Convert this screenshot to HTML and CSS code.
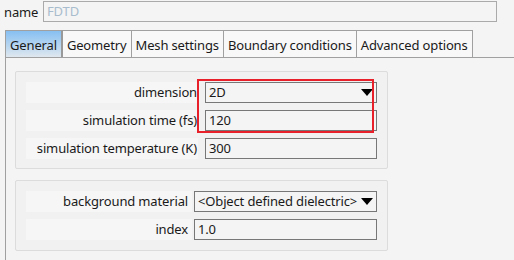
FILE: index.html
```html
<!DOCTYPE html>
<html lang="en">

<head>
    <meta charset="UTF-8" />
    <title>FDTD</title>
    <link rel="stylesheet" href="styles.css">
</head>

<body>
    <div class="name-row">
        <span class="name-label">name</span>
        <div class="name-input">FDTD</div>
    </div>

    <div class="tabs">
        <div class="tab active">General</div>
        <div class="tab">Geometry</div>
        <div class="tab">Mesh settings</div>
        <div class="tab">Boundary conditions</div>
        <div class="tab">Advanced options</div>
    </div>

    <div class="panel">
        <div class="group group-sim">
            <div class="row">
                <div class="label">dimension</div>
                <div class="field combo">2D<span class="arrow"></span></div>
            </div>
            <div class="row">
                <div class="label">simulation time (fs)</div>
                <div class="field">120</div>
            </div>
            <div class="row">
                <div class="label">simulation temperature (K)</div>
                <div class="field">300</div>
            </div>
            <!-- highlight annotation -->
            <div class="highlight"></div>
        </div>

        <div class="group group-bg">
            <div class="row">
                <div class="label">background material</div>
                <div class="field combo">&lt;Object defined dielectric&gt;<span class="arrow"></span></div>
            </div>
            <div class="row">
                <div class="label">index</div>
                <div class="field">1.0</div>
            </div>
        </div>
    </div>
</body>

</html>
```

FILE: styles.css
```css
* {
    box-sizing: border-box;
}

body {
    margin: 0;
    background: #f4f4f4;
    font-family: 'Noto Sans', sans-serif;
    font-size: 13px;
    letter-spacing: -0.15px;
    color: #1a1a1a;
}

.name-row {
    display: flex;
    align-items: center;
    padding: 1px 0 0 4px;
    gap: 7px;
}

.name-label {
    width: 32px;
}

.name-input {
    width: 454px;
    height: 21px;
    border: 1px solid #aaa;
    padding-left: 3px;
    line-height: 19px;
    color: #a8bccd;
    background: #f4f4f4;
}

.tabs {
    display: flex;
    margin: 8px 0 0 5px;
}

.tab {
    height: 27px;
    line-height: 25px;
    padding: 2px 4px 0 4px;
    border: 1px solid #a0a0a0;
    border-left-width: 0;
    border-bottom: none;
    background: #f8f8f8;
    white-space: nowrap;
}

.tab:first-child {
    border-left-width: 1px;
}

.tab.active {
    background: linear-gradient(#86bff2, #dfe7ee);
    border-right: 2px solid #999;
}

.panel {
    border-top: 1px solid #a0a0a0;
    border-left: 1px solid #a0a0a0;
    margin-left: 5px;
    padding: 13px 0 0 9px;
    height: 203px;
}

.group {
    position: relative;
    width: 373px;
    border: 1px solid #dcdcdc;
    border-radius: 2px;
    background: #f1f1f1;
    padding: 10px 10px 9px 10px;
    display: flex;
    flex-direction: column;
    gap: 7px;
}

.group-bg {
    margin-top: 11px;
    padding-bottom: 10px;
}

.row {
    display: flex;
    gap: 7px;
    height: 21px;
}

.label {
    background: #f6f6f6;
    text-align: right;
    line-height: 21px;
    padding-right: 1px;
    white-space: nowrap;
}

.group-sim .label {
    width: 172px;
}

.group-bg .row {
    gap: 2px;
}

.group-bg .label {
    width: 166px;
    padding-right: 4px;
}

.field {
    flex: 1;
    border: 1px solid #777;
    background: #f4f4f4;
    line-height: 19px;
    padding-left: 3px;
    position: relative;
    white-space: nowrap;
}

.arrow {
    position: absolute;
    right: 3px;
    top: 6px;
    width: 0;
    height: 0;
    border-left: 6px solid transparent;
    border-right: 6px solid transparent;
    border-top: 7px solid #000;
}

.highlight {
    position: absolute;
    left: 181px;
    top: 7px;
    width: 177px;
    height: 54px;
    border: 2px solid #e8202a;
}
```
